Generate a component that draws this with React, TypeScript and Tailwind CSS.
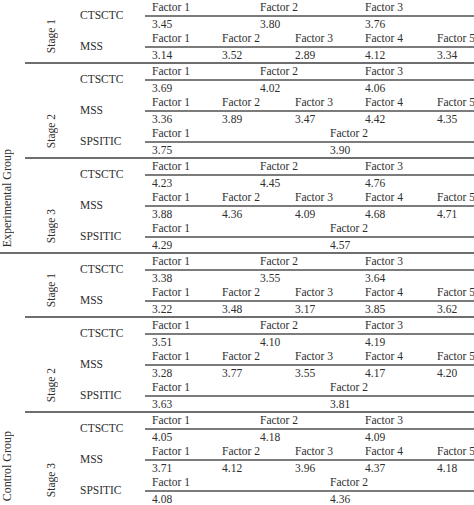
import React from "react";

type Test = { name: string; values: string[] };
type Stage = { name: string; tests: Test[] };
type Group = { name: string; stages: Stage[] };

const groups: Group[] = [
  {
    name: "Experimental Group",
    stages: [
      {
        name: "Stage 1",
        tests: [
          { name: "CTSCTC", values: ["3.45", "3.80", "3.76"] },
          { name: "MSS", values: ["3.14", "3.52", "2.89", "4.12", "3.34"] },
        ],
      },
      {
        name: "Stage 2",
        tests: [
          { name: "CTSCTC", values: ["3.69", "4.02", "4.06"] },
          { name: "MSS", values: ["3.36", "3.89", "3.47", "4.42", "4.35"] },
          { name: "SPSITIC", values: ["3.75", "3.90"] },
        ],
      },
      {
        name: "Stage 3",
        tests: [
          { name: "CTSCTC", values: ["4.23", "4.45", "4.76"] },
          { name: "MSS", values: ["3.88", "4.36", "4.09", "4.68", "4.71"] },
          { name: "SPSITIC", values: ["4.29", "4.57"] },
        ],
      },
    ],
  },
  {
    name: "Control Group",
    stages: [
      {
        name: "Stage 1",
        tests: [
          { name: "CTSCTC", values: ["3.38", "3.55", "3.64"] },
          { name: "MSS", values: ["3.22", "3.48", "3.17", "3.85", "3.62"] },
        ],
      },
      {
        name: "Stage 2",
        tests: [
          { name: "CTSCTC", values: ["3.51", "4.10", "4.19"] },
          { name: "MSS", values: ["3.28", "3.77", "3.55", "4.17", "4.20"] },
          { name: "SPSITIC", values: ["3.63", "3.81"] },
        ],
      },
      {
        name: "Stage 3",
        tests: [
          { name: "CTSCTC", values: ["4.05", "4.18", "4.09"] },
          { name: "MSS", values: ["3.71", "4.12", "3.96", "4.37", "4.18"] },
          { name: "SPSITIC", values: ["4.08", "4.36"] },
        ],
      },
    ],
  },
];

const widthsFor = (n: number): string[] => {
  if (n === 5) return ["w-[70px]", "w-[73px]", "w-[70px]", "w-[72px]", "flex-1"];
  if (n === 3) return ["w-[108px]", "w-[105px]", "flex-1"];
  return ["w-[178px]", "flex-1"];
};

function TestBlock({ test }: { test: Test }) {
  const widths = widthsFor(test.values.length);
  return (
    <div className="flex">
      <div className="w-[75px] shrink-0 flex items-center pl-[10px]">{test.name}</div>
      <div className="flex-1 flex flex-col min-w-0">
        <div className="flex h-[17px] leading-[14px] border-b-2 border-[#7c7c7c]">
          {test.values.map((_, i) => (
            <div key={i} className={`${widths[i]} shrink-0 pl-[7px] whitespace-nowrap`}>
              Factor {i + 1}
            </div>
          ))}
        </div>
        <div className="flex h-[14px] leading-[15px]">
          {test.values.map((v, i) => (
            <div key={i} className={`${widths[i]} shrink-0 pl-[7px] whitespace-nowrap`}>
              {v}
            </div>
          ))}
        </div>
      </div>
    </div>
  );
}

export default function App() {
  return (
    <div className="w-full h-[505px] overflow-hidden bg-white text-[#2e2e2e] font-['Liberation_Serif',serif] text-[11.5px]">
      {groups.map((g) => (
        <div key={g.name} className="flex border-b-2 border-[#6e6e6e]">
          <div className="w-[25px] shrink-0 flex flex-col justify-end items-start pb-[5px]">
            <div className="[writing-mode:vertical-rl] rotate-180 leading-[14px] text-[12px] whitespace-nowrap">
              {g.name}
            </div>
          </div>
          <div className="flex-1 flex flex-col min-w-0">
            {g.stages.map((s, si) => (
              <div
                key={s.name}
                className={
                  si < g.stages.length - 1
                    ? "flex border-b-2 border-[#6e6e6e]"
                    : "flex"
                }
              >
                <div className="w-[45px] shrink-0 flex flex-col justify-end items-start pl-[19px] pb-[9px]">
                  <div className="[writing-mode:vertical-rl] rotate-180 leading-[14px] whitespace-nowrap">
                    {s.name}
                  </div>
                </div>
                <div className="flex-1 flex flex-col min-w-0">
                  {s.tests.map((t) => (
                    <TestBlock key={t.name} test={t} />
                  ))}
                </div>
              </div>
            ))}
          </div>
        </div>
      ))}
    </div>
  );
}
